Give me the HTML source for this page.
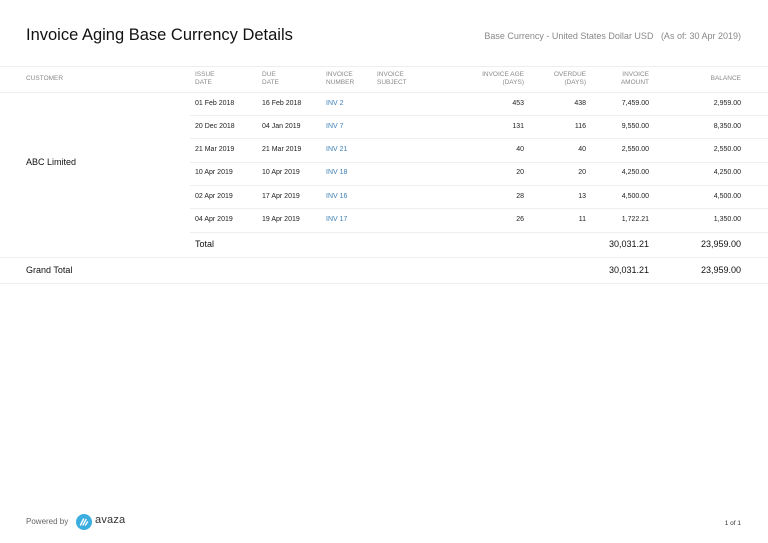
<!DOCTYPE html>
<html><head><meta charset="utf-8"><style>
body{margin:0;width:768px;height:543px;background:#fff;font-family:"Liberation Sans",sans-serif;position:relative;overflow:hidden}
.a{position:absolute;white-space:nowrap}
.h{font-size:6.5px;color:#8a8a8a;line-height:8px}
.d{font-size:7px;color:#222}
.r{text-align:right}
.l{position:absolute;height:1px;background:#eee;right:0}
.b{color:#3b7fb8}
</style></head><body>
<div class="a" style="left:26px;top:26px;font-size:16.5px;color:#111">Invoice Aging Base Currency Details</div>
<div class="a" style="right:27px;top:31px;font-size:9px;color:#888">Base Currency - United States Dollar USD &nbsp;&nbsp;(As of: 30 Apr 2019)</div>
<div class="l" style="left:0;top:66px"></div>
<div class="a h" style="left:26px;top:75px">CUSTOMER</div>
<div class="a h" style="left:195px;top:71px">ISSUE<br>DATE</div>
<div class="a h" style="left:262px;top:71px">DUE<br>DATE</div>
<div class="a h" style="left:326px;top:71px">INVOICE<br>NUMBER</div>
<div class="a h" style="left:377px;top:71px">INVOICE<br>SUBJECT</div>
<div class="a h r" style="right:244px;top:71px">INVOICE AGE<br>(DAYS)</div>
<div class="a h r" style="right:182px;top:71px">OVERDUE<br>(DAYS)</div>
<div class="a h r" style="right:119px;top:71px">INVOICE<br>AMOUNT</div>
<div class="a h r" style="right:27px;top:75px">BALANCE</div>
<div class="l" style="left:0;top:92px"></div>
<div class="a" style="left:26px;top:157px;font-size:9px;color:#111">ABC Limited</div>
<div id="rows"></div>
<script>
var R=[["01 Feb 2018","16 Feb 2018","INV 2","453","438","7,459.00","2,959.00"],
["20 Dec 2018","04 Jan 2019","INV 7","131","116","9,550.00","8,350.00"],
["21 Mar 2019","21 Mar 2019","INV 21","40","40","2,550.00","2,550.00"],
["10 Apr 2019","10 Apr 2019","INV 18","20","20","4,250.00","4,250.00"],
["02 Apr 2019","17 Apr 2019","INV 16","28","13","4,500.00","4,500.00"],
["04 Apr 2019","19 Apr 2019","INV 17","26","11","1,722.21","1,350.00"]];
var h="";R.forEach(function(r,i){var t=99.5+i*23.3;
h+='<div class="a d" style="left:195px;top:'+t+'px">'+r[0]+'</div><div class="a d" style="left:262px;top:'+t+'px">'+r[1]+'</div><div class="a d b" style="left:326px;top:'+t+'px">'+r[2]+'</div><div class="a d r" style="right:244px;top:'+t+'px">'+r[3]+'</div><div class="a d r" style="right:182px;top:'+t+'px">'+r[4]+'</div><div class="a d r" style="right:119px;top:'+t+'px">'+r[5]+'</div><div class="a d r" style="right:27px;top:'+t+'px">'+r[6]+'</div><div class="l" style="left:190px;top:'+(115+i*23.3)+'px"></div>';});
document.getElementById("rows").innerHTML=h;
</script>
<div class="a" style="left:195px;top:239px;font-size:9px;color:#111">Total</div>
<div class="a r" style="right:119px;top:239px;font-size:9px;color:#111">30,031.21</div>
<div class="a r" style="right:27px;top:239px;font-size:9px;color:#111">23,959.00</div>
<div class="l" style="left:0;top:257px"></div>
<div class="a" style="left:26px;top:265px;font-size:9px;color:#111">Grand Total</div>
<div class="a r" style="right:119px;top:265px;font-size:9px;color:#111">30,031.21</div>
<div class="a r" style="right:27px;top:265px;font-size:9px;color:#111">23,959.00</div>
<div class="l" style="left:0;top:283px"></div>
<div class="a" style="left:26px;top:517px;font-size:8px;color:#666">Powered by</div>
<svg class="a" style="left:76px;top:514px" width="16" height="16"><circle cx="8" cy="8" r="8" fill="#3aaee0"/><path d="M4.5 11 L7.5 5 M7 11 L10 5.5 M9.5 11 L11.5 8" stroke="#fff" stroke-width="1.4" fill="none" stroke-linecap="round"/></svg>
<div class="a" style="left:95px;top:514px;font-size:11px;color:#333;letter-spacing:0.2px">avaza</div>
<div class="a" style="right:27px;top:520px;font-size:6.5px;color:#333">1 of 1</div>
</body></html>
